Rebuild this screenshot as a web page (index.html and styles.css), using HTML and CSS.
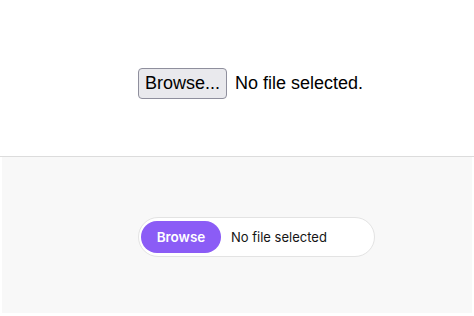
FILE: index.html
```html
<!DOCTYPE html>
<html lang="en">
<head>
    <meta charset="UTF-8">
    <meta name="viewport" content="width=device-width, initial-scale=1.0">
    <title>File input</title>
    <link rel="stylesheet" href="styles.css">
</head>
<body>
    <div class="native">
        <div class="native-input">
            <button class="native-btn">Browse...</button>
            <span class="native-label">No file selected.</span>
        </div>
    </div>

    <div class="styled">
        <div class="pill">
            <button class="pill-btn">Browse</button>
            <span class="pill-label">No file selected</span>
        </div>
    </div>
</body>
</html>
```

FILE: styles.css
```css
body { margin: 0; background: #fff; }
.native { height: 156px; border-bottom: 1px solid #dcdcdc; display: flex; align-items: center; padding-left: 138px; }
.native-input { display: flex; align-items: center; gap: 8px; font-family: "Liberation Sans", Arial, sans-serif; font-size: 18px; color: #000; margin-top: 10px; }
.native-btn { font: inherit; height: 31px; padding: 0 6px; background: #e9e9ed; border: 1px solid #8f8f9d; border-radius: 4px; color: #000; }
.styled { height: 156px; margin: 0 2px; background: #f8f8f8; display: flex; align-items: center; padding-left: 136px; }
.pill { display: flex; align-items: center; width: 237px; height: 40px; box-sizing: border-box; padding: 0 2px; background: #fff; border: 1px solid #e3e3e3; border-radius: 20px; margin-top: 3px; font-family: Inter, sans-serif; font-size: 13px; }
.pill-btn { height: 32px; width: 80px; border: none; border-radius: 16px; background: #8b5cf6; color: #fff; font: inherit; font-weight: 600; font-size: 13.5px; }
.pill-label { margin-left: 10px; color: #151515; }
```
